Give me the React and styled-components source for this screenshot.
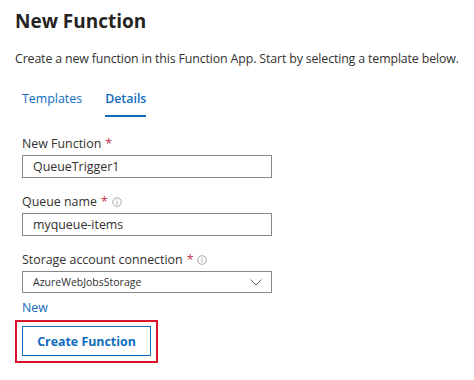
import React, { useState } from "react";
import styled, { createGlobalStyle } from "styled-components";

const GlobalStyle = createGlobalStyle`
  body {
    margin: 0;
    background: #ffffff;
    font-family: "Open Sans", "Noto Sans", sans-serif;
    color: #323130;
  }
`;

const Page = styled.div`
  padding: 8px 15px 0 15px;
`;

const Title = styled.h1`
  margin: 0;
  font-size: 19px;
  font-weight: 700;
  line-height: 26px;
  color: #252423;
`;

const Intro = styled.p`
  margin: 16px 0 0 0;
  font-size: 12.4px;
  line-height: 18px;
  letter-spacing: -0.15px;
  white-space: nowrap;
  color: #323130;
`;

const Tabs = styled.div`
  display: flex;
  gap: 23px;
  margin: 22px 0 0 7px;
`;

const Tab = styled.div`
  font-size: 12.4px;
  line-height: 18px;
  padding-bottom: 7px;
  color: #0f6cbd;
  font-weight: ${(p) => (p.active ? 600 : 400)};
  border-bottom: 2px solid ${(p) => (p.active ? "#0f6cbd" : "transparent")};
  cursor: pointer;
`;

const Form = styled.div`
  display: flex;
  flex-direction: column;
  margin: 18px 0 0 7px;
`;

const Field = styled.div`
  display: flex;
  flex-direction: column;
  margin-bottom: ${(p) => (p.last ? "0" : "15px")};
`;

const Label = styled.label`
  display: flex;
  align-items: center;
  font-size: 12.4px;
  line-height: 18px;
  color: #323130;
  margin-bottom: 2px;
`;

const Star = styled.span`
  color: #c4314b;
  margin-left: 4px;
`;

const Info = styled.span`
  display: inline-flex;
  margin-left: 4px;
  color: #a19f9d;
`;

const Input = styled.input`
  box-sizing: border-box;
  width: 250px;
  height: 23px;
  border: 1px solid #8a8886;
  border-radius: 0;
  padding: 0 10px;
  font-family: inherit;
  font-size: 12.4px;
  color: #323130;
  outline: none;
`;

const SelectBox = styled.div`
  box-sizing: border-box;
  width: 250px;
  height: 22px;
  border: 1px solid #8a8886;
  display: flex;
  align-items: center;
  justify-content: space-between;
  padding: 0 9px 0 10px;
  font-size: 10.5px;
  color: #323130;
`;

const NewLink = styled.a`
  font-size: 12.4px;
  line-height: 18px;
  color: #0f6cbd;
  margin-top: 6px;
  cursor: pointer;
`;

const Highlight = styled.div`
  align-self: flex-start;
  margin: 3px 0 0 -7px;
  padding: 4px 5px 5px 5px;
  border: 2px solid #d9142b;
`;

const CreateButton = styled.button`
  box-sizing: border-box;
  width: 129px;
  height: 30px;
  background: #ffffff;
  border: 1px solid #0f6cbd;
  color: #0f6cbd;
  font-family: inherit;
  font-size: 12.4px;
  font-weight: 700;
  cursor: pointer;
`;

const InfoIcon = () => (
  <svg width="10" height="10" viewBox="0 0 10 10">
    <circle cx="5" cy="5" r="4.3" fill="none" stroke="currentColor" strokeWidth="0.9" />
    <line x1="5" y1="4.2" x2="5" y2="7.4" stroke="currentColor" strokeWidth="0.9" />
    <circle cx="5" cy="2.8" r="0.6" fill="currentColor" />
  </svg>
);

const Chevron = () => (
  <svg width="12" height="7" viewBox="0 0 12 7">
    <polyline points="0.5,0.5 6,6 11.5,0.5" fill="none" stroke="#605e5c" strokeWidth="1" />
  </svg>
);

export default function App() {
  const [tab, setTab] = useState("Details");
  const [name, setName] = useState("QueueTrigger1");
  const [queue, setQueue] = useState("myqueue-items");

  return (
    <Page>
      <GlobalStyle />
      <Title>New Function</Title>
      <Intro>
        Create a new function in this Function App. Start by selecting a template below.
      </Intro>
      <Tabs>
        {["Templates", "Details"].map((t) => (
          <Tab key={t} active={tab === t} onClick={() => setTab(t)}>
            {t}
          </Tab>
        ))}
      </Tabs>
      <Form>
        <Field>
          <Label>
            New Function<Star>*</Star>
          </Label>
          <Input value={name} onChange={(e) => setName(e.target.value)} />
        </Field>
        <Field>
          <Label>
            Queue name<Star>*</Star>
            <Info>
              <InfoIcon />
            </Info>
          </Label>
          <Input value={queue} onChange={(e) => setQueue(e.target.value)} />
        </Field>
        <Field last>
          <Label>
            Storage account connection<Star>*</Star>
            <Info>
              <InfoIcon />
            </Info>
          </Label>
          <SelectBox>
            <span>AzureWebJobsStorage</span>
            <Chevron />
          </SelectBox>
        </Field>
        <NewLink>New</NewLink>
        <Highlight>
          <CreateButton>Create Function</CreateButton>
        </Highlight>
      </Form>
    </Page>
  );
}
